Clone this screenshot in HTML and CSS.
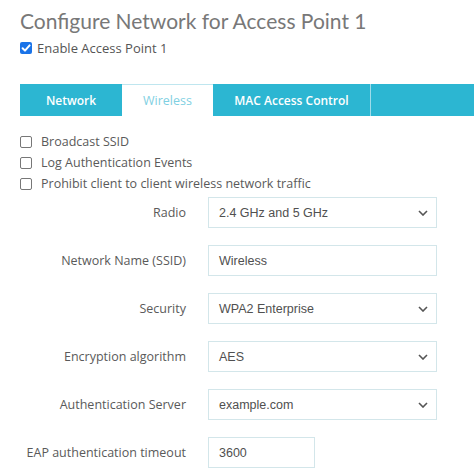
FILE: index.html
```html
<!DOCTYPE html>
<html>
<head>
<meta charset="utf-8">
<link rel="stylesheet" href="styles.css">
</head>
<body>
<div class="page">
  <h1 class="title">Configure Network for Access Point 1</h1>
  <label class="enable"><span class="cb checked"><svg viewBox="0 0 12 12" width="12" height="12"><path d="M2.6 6.2 L5 8.6 L9.6 3.4" fill="none" stroke="#fff" stroke-width="2" stroke-linecap="round" stroke-linejoin="round"/></svg></span>Enable Access Point 1</label>

  <div class="tabs">
    <div class="tab">Network</div>
    <div class="tab active">Wireless</div>
    <div class="tab mac">MAC Access Control</div>
    <div class="tab filler"></div>
  </div>

  <div class="checks">
    <label class="check"><span class="cb"></span>Broadcast SSID</label>
    <label class="check"><span class="cb"></span>Log Authentication Events</label>
    <label class="check"><span class="cb"></span>Prohibit client to client wireless network traffic</label>
  </div>

  <div class="form">
    <div class="row"><div class="lbl">Radio</div><div class="field select">2.4 GHz and 5 GHz<svg class="chev" viewBox="0 0 10 6" width="10" height="6"><path d="M1 1 L5 5 L9 1" fill="none" stroke="#555" stroke-width="1.6"/></svg></div></div>
    <div class="row"><div class="lbl">Network Name (SSID)</div><div class="field">Wireless</div></div>
    <div class="row"><div class="lbl">Security</div><div class="field select">WPA2 Enterprise<svg class="chev" viewBox="0 0 10 6" width="10" height="6"><path d="M1 1 L5 5 L9 1" fill="none" stroke="#555" stroke-width="1.6"/></svg></div></div>
    <div class="row"><div class="lbl">Encryption algorithm</div><div class="field select">AES<svg class="chev" viewBox="0 0 10 6" width="10" height="6"><path d="M1 1 L5 5 L9 1" fill="none" stroke="#555" stroke-width="1.6"/></svg></div></div>
    <div class="row"><div class="lbl">Authentication Server</div><div class="field select">example.com<svg class="chev" viewBox="0 0 10 6" width="10" height="6"><path d="M1 1 L5 5 L9 1" fill="none" stroke="#555" stroke-width="1.6"/></svg></div></div>
    <div class="row"><div class="lbl">EAP authentication timeout</div><div class="field short">3600</div></div>
  </div>
</div>
</body>
</html>
```
FILE: styles.css
```css
html, body { margin: 0; padding: 0; background: #fff; }
body { font-family: "Open Sans", "DejaVu Sans", sans-serif; color: #555; }
.page { padding: 9px 0 0 20px; }
.title {
  margin: 0;
  font-family: Lato, "Open Sans", sans-serif;
  font-weight: 400;
  font-size: 21px;
  line-height: 24px;
  color: #787878;
}
.enable {
  display: flex; align-items: center;
  margin-top: 6px;
  font-size: 13px; line-height: 18px; color: #555;
}
.cb {
  display: inline-flex; align-items: center; justify-content: center;
  width: 10px; height: 10px;
  border: 1px solid #777; border-radius: 2px;
  background: #fff;
  margin-right: 8px;
  flex: none;
}
.cb.checked { background: #1a73e8; border-color: #1a73e8; width: 12px; height: 12px; border: 0; margin-right: 5px; }
.tabs {
  display: flex;
  margin-top: 27px;
  height: 32px;
  background: #2cb6d2;
}
.tab {
  display: flex; align-items: center; justify-content: center;
  color: #fff; font-weight: 600; font-size: 12px;
  padding: 0;
}
.tab:first-child { width: 102px; }
.tab.active {
  width: 91px; background: #fff; color: #7fd0e2; font-weight: 400; font-size: 12.5px;
  border-top: 1px solid #bfe6ef; box-sizing: border-box;
}
.tab.mac { width: 157px; border-right: 1px solid #9fdcea; }
.tab.filler { flex: 1; }
.checks { margin-top: 15px; }
.check {
  display: flex; align-items: center;
  font-size: 12.5px; line-height: 21px; color: #5a5a5a;
}
.check .cb { margin-right: 9px; }
.form { margin-top: 3px; }
.row {
  display: flex; align-items: center;
  height: 31px; margin-bottom: 17px;
}
.lbl {
  width: 166px; text-align: right;
  font-size: 12.5px; color: #5a5a5a;
  margin-right: 22px;
}
.field {
  box-sizing: border-box;
  width: 229px; height: 31px;
  border: 1px solid #d3e6ea;
  display: flex; align-items: center;
  padding: 0 10px;
  font-family: "Liberation Sans", Arial, sans-serif;
  font-size: 12.5px; color: #505050;
  position: relative;
}
.field.short { width: 107px; }
.chev { position: absolute; right: 8px; top: 12px; }
```
